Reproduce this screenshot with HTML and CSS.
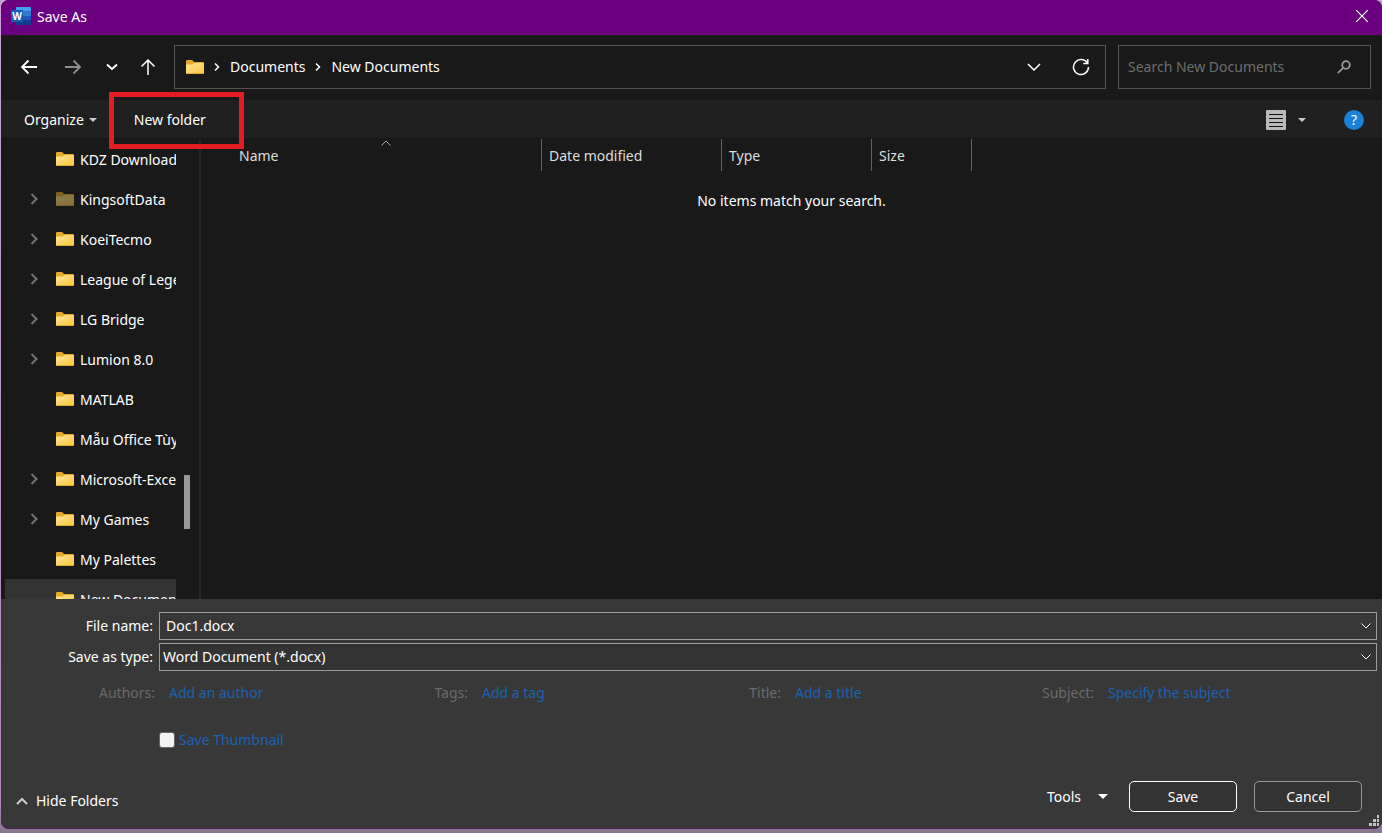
FILE: index.html
```html
<!DOCTYPE html>
<html lang="en">
<head>
    <meta charset="UTF-8">
    <meta name="viewport" content="width=device-width, initial-scale=1.0">
    <title>Save As</title>
    <link rel="stylesheet" href="styles.css">
</head>
<body>
    <!-- shared icons -->
    <svg class="defs" width="0" height="0">
        <defs>
            <linearGradient id="front" x1="0" y1="0" x2="1" y2="1">
                <stop offset="0" stop-color="#ffe394"/>
                <stop offset="1" stop-color="#fbc740"/>
            </linearGradient>
        </defs>
        <symbol id="folder" viewBox="0 0 18 14">
            <path d="M0 1.2Q0 0 1.2 0H5.6Q6.2 0 6.7.5L8 2H16.8Q18 2 18 3.2V7H0Z" fill="#e9a927"/>
            <path d="M0 4.6H6Q6.8 4.6 7.3 4L8.2 3H17Q18 3 18 4V12.8Q18 14 16.8 14H1.2Q0 14 0 12.8Z" fill="url(#front)"/>
            <path d="M0 12.6Q0 14 1.2 14H16.8Q18 14 18 12.6V13H0Z" fill="#e5ab32"/>
        </symbol>
        <symbol id="expand" viewBox="0 0 8 12">
            <path d="M1.5 1 6.5 6 1.5 11" fill="none" stroke="currentColor" stroke-width="2"/>
        </symbol>
        <symbol id="down" viewBox="0 0 12 8">
            <path d="M1.5 1.5 6 6 10.5 1.5" fill="none" stroke="currentColor" stroke-width="1"/>
        </symbol>
    </svg>

    <div class="dialog">
        <header class="titlebar">
            <svg class="word" width="20" height="18" viewBox="0 0 20 18">
                <path d="M5 1Q5 0 6 0H19Q20 0 20 1V4.5H5Z" fill="#41a5ee"/>
                <path d="M5 4.5H20V9H5Z" fill="#2b7cd3"/>
                <path d="M5 9H20V13.5H5Z" fill="#185abd"/>
                <path d="M5 13.5H20V17Q20 18 19 18H6Q5 18 5 17Z" fill="#103f91"/>
                <rect y="3" width="12" height="12" rx="1" fill="#185abd"/>
                <text x="6" y="13" text-anchor="middle">W</text>
            </svg>
            <h1>Save As</h1>
            <button type="button" class="close" aria-label="Close">
                <svg width="12" height="12" viewBox="0 0 12 12"><path d="M0 0 12 12M12 0 0 12" stroke="#fff" stroke-width="1.2"/></svg>
            </button>
        </header>

        <nav class="navbar">
            <button type="button" class="arrow" aria-label="Back">
                <svg width="18" height="16" viewBox="0 0 18 16"><path d="M17 8H2M8.5 1.5 2 8 8.5 14.5"/></svg>
            </button>
            <button type="button" class="arrow forward" aria-label="Forward">
                <svg width="18" height="16" viewBox="0 0 18 16"><path d="M1 8H16M9.5 1.5 16 8 9.5 14.5"/></svg>
            </button>
            <button type="button" class="recent" aria-label="Recent locations">
                <svg width="12" height="8" viewBox="0 0 12 8"><path d="M1 1.5 6 6 11 1.5"/></svg>
            </button>
            <button type="button" class="up" aria-label="Up">
                <svg width="16" height="18" viewBox="0 0 16 18"><path d="M8 17V2M1.5 8.5 8 2 14.5 8.5"/></svg>
            </button>
            <div class="address">
                <svg width="18" height="14"><use href="#folder"/></svg>
                <svg class="sep" width="6" height="8" viewBox="0 0 6 8"><path d="M1 .5 4.5 4 1 7.5"/></svg>
                <a href="#">Documents</a>
                <svg class="sep" width="6" height="8" viewBox="0 0 6 8"><path d="M1 .5 4.5 4 1 7.5"/></svg>
                <a href="#">New Documents</a>
                <button type="button" class="history" aria-label="Previous locations">
                    <svg width="14" height="8" viewBox="0 0 14 8"><path d="M1 1 7 7 13 1"/></svg>
                </button>
                <button type="button" class="refresh" aria-label="Refresh">
                    <svg width="18" height="18" viewBox="0 0 18 18"><path d="M15.6 5.5A7.5 7.5 0 1 0 16.5 9M15.8 1V5.6H11.2"/></svg>
                </button>
            </div>
            <div class="search">
                <input type="text" placeholder="Search New Documents" aria-label="Search New Documents">
                <svg width="14" height="14" viewBox="0 0 14 14"><circle cx="9" cy="5" r="3.8"/><path d="M6.2 7.8.8 13.2"/></svg>
            </div>
        </nav>

        <div class="toolbar">
            <button type="button" class="organize">Organize <span class="caret"></span></button>
            <button type="button" class="new-folder">New folder</button>
            <button type="button" class="view" aria-label="Change view">
                <svg width="20" height="20" viewBox="0 0 20 20">
                    <rect width="20" height="20" rx="1" fill="#b9b9b9"/>
                    <path d="M3 4.5H17M3 8.5H17M3 12.5H17M3 16.5H17" stroke="#111" stroke-width="1"/>
                </svg>
                <span class="caret"></span>
            </button>
            <button type="button" class="help" aria-label="Help">?</button>
        </div>

        <div class="browser">
            <aside class="tree">
                <ul>
                    <li><svg class="folder"><use href="#folder"/></svg><span>KDZ Downloader</span></li>
                    <li class="has-children hidden-folder"><svg class="expand"><use href="#expand"/></svg><svg class="folder"><use href="#folder"/></svg><span>KingsoftData</span></li>
                    <li class="has-children"><svg class="expand"><use href="#expand"/></svg><svg class="folder"><use href="#folder"/></svg><span>KoeiTecmo</span></li>
                    <li class="has-children"><svg class="expand"><use href="#expand"/></svg><svg class="folder"><use href="#folder"/></svg><span>League of Legends</span></li>
                    <li class="has-children"><svg class="expand"><use href="#expand"/></svg><svg class="folder"><use href="#folder"/></svg><span>LG Bridge</span></li>
                    <li class="has-children"><svg class="expand"><use href="#expand"/></svg><svg class="folder"><use href="#folder"/></svg><span>Lumion 8.0</span></li>
                    <li><svg class="folder"><use href="#folder"/></svg><span>MATLAB</span></li>
                    <li><svg class="folder"><use href="#folder"/></svg><span>Mẫu Office Tùy</span></li>
                    <li class="has-children"><svg class="expand"><use href="#expand"/></svg><svg class="folder"><use href="#folder"/></svg><span>Microsoft-Excel</span></li>
                    <li class="has-children"><svg class="expand"><use href="#expand"/></svg><svg class="folder"><use href="#folder"/></svg><span>My Games</span></li>
                    <li><svg class="folder"><use href="#folder"/></svg><span>My Palettes</span></li>
                    <li class="selected"><svg class="folder"><use href="#folder"/></svg><span>New Documents</span></li>
                </ul>
                <div class="thumb"></div>
            </aside>
            <main class="files">
                <table>
                    <thead>
                        <tr>
                            <th class="name">Name
                                <svg class="sort" width="10" height="6" viewBox="0 0 10 6"><path d="M.5 5.5 5 1 9.5 5.5"/></svg>
                            </th>
                            <th class="date">Date modified</th>
                            <th class="type">Type</th>
                            <th class="size">Size</th>
                        </tr>
                    </thead>
                </table>
                <p>No items match your search.</p>
            </main>
        </div>

        <form class="details">
            <div class="fields">
                <label for="filename">File name:</label>
                <div class="field">
                    <input type="text" id="filename" value="Doc1.docx">
                    <svg width="12" height="8"><use href="#down"/></svg>
                </div>
                <label for="filetype">Save as type:</label>
                <div class="field type-field">
                    <select id="filetype">
                        <option>Word Document (*.docx)</option>
                    </select>
                    <svg width="12" height="8"><use href="#down"/></svg>
                </div>
            </div>
            <div class="meta">
                <div><span>Authors:</span><a href="#">Add an author</a></div>
                <div><span>Tags:</span><a href="#">Add a tag</a></div>
                <div><span>Title:</span><a href="#">Add a title</a></div>
                <div><span>Subject:</span><a href="#">Specify the subject</a></div>
            </div>
            <div class="thumbnail">
                <input type="checkbox" id="thumbnail">
                <label for="thumbnail">Save Thumbnail</label>
            </div>
            <div class="actions">
                <button type="button" class="hide">
                    <svg width="12" height="8" viewBox="0 0 12 8"><path d="M1 7 6 2 11 7"/></svg>
                    Hide Folders
                </button>
                <button type="button" class="tools">Tools <span class="caret"></span></button>
                <button type="submit" class="btn primary">Save</button>
                <button type="button" class="btn">Cancel</button>
            </div>
            <svg class="grip" width="10" height="11" viewBox="0 0 10 11">
                <path d="M8 0h2v3h-2zM4 4h3v3h-3zM8 4h2v3h-2zM0 8h3v3h-3zM4 8h3v3h-3zM8 8h2v3h-2z" fill="#c4c4c4"/>
            </svg>
        </form>
    </div>
</body>
</html>
```
FILE: styles.css
```css
* {
    box-sizing: border-box;
}
body {
    margin: 0;
    padding: 0 0 4px 1px;
    height: 100vh;
    font-family: "Noto Sans", "Open Sans", sans-serif;
    font-size: 14px;
    line-height: 22px;
    color: #fff;
    background: linear-gradient(#c9a2d6, #b184c0 97%, #857688);
}
button, input, select {
    font: inherit;
    color: inherit;
    background: none;
    border: 0;
    padding: 0;
    margin: 0;
}
button {
    display: flex;
    align-items: center;
    justify-content: center;
}
a {
    color: inherit;
    text-decoration: none;
}
.defs {
    position: absolute;
}
.dialog {
    display: flex;
    flex-direction: column;
    height: 100%;
    overflow: hidden;
    background: #191919;
    border-bottom: 1px solid #4a1c5c;
    border-radius: 8px;
}
.caret {
    border: 4px solid transparent;
    border-top-color: #ccc;
    border-bottom: 0;
}

/* title bar */
.titlebar {
    display: flex;
    align-items: center;
    flex: none;
    height: 35px;
    padding: 0 14px 3px 10px;
    background: #6a0080;
}
.word text {
    font-size: 10px;
    font-weight: bold;
    fill: #fff;
}
.titlebar h1 {
    margin: 0 auto 0 6px;
    padding-top: 2px;
    font-size: 14px;
    font-weight: normal;
}

/* navigation */
.navbar {
    display: flex;
    flex: none;
    height: 65px;
    padding: 10px 11px 11px 6px;
}
.navbar path, .navbar circle {
    fill: none;
    stroke: currentColor;
    stroke-width: 1.8;
}
.arrow {
    width: 44px;
}
.forward {
    color: #8f8f8f;
}
.recent {
    width: 33px;
}
.up {
    width: 39px;
}
.up path, .address path {
    stroke-width: 1.5;
}
.address {
    display: flex;
    flex: 1;
    align-items: center;
    margin: 0 12px 0 7px;
    padding: 0 15px 0 11px;
    border: 1px solid #535353;
}
.sep {
    margin: 0 10px;
}
.history {
    margin-left: auto;
}
.refresh {
    margin-left: 31px;
}
.search {
    display: flex;
    align-items: center;
    width: 253px;
    padding: 0 19px 0 9px;
    border: 1px solid #535353;
    color: #999;
}
.search input {
    flex: 1;
    min-width: 0;
}
.search input::placeholder {
    color: #6d6d6d;
    opacity: 1;
}

/* toolbar */
.toolbar {
    display: flex;
    align-items: center;
    flex: none;
    height: 39px;
    padding: 1px 18px 0 23px;
    background: #202020;
    border-bottom: 1px solid #151515;
}
.organize {
    gap: 5px;
}
.new-folder {
    position: relative;
    margin: 0 auto 0 37px;
}
/* red highlight round the New folder button */
.new-folder::after {
    content: "";
    position: absolute;
    inset: -17px -38px -18px -25px;
    border: 5px solid #e51c23;
}
.view {
    gap: 12px;
}
.help {
    width: 20px;
    height: 20px;
    margin-left: 38px;
    border-radius: 50%;
    background: #1683d8;
}

/* folder tree and file list */
.browser {
    display: flex;
    flex: 1;
    min-height: 0;
}
.tree {
    display: flex;
    flex: none;
    width: 200px;
    padding: 0 8px 0 4px;
    overflow: hidden;
    border-right: 2px solid #272727;
}
.tree ul {
    width: 171px;
    margin: 0;
    padding: 0;
    list-style: none;
}
.tree li {
    display: flex;
    align-items: center;
    height: 40px;
    padding-left: 51px;
    overflow: hidden;
    white-space: nowrap;
}
.tree .has-children {
    padding-left: 25px;
}
.tree .selected {
    background: #333;
}
.tree span {
    padding-top: 2px;
}
.tree .folder {
    flex: none;
    width: 18px;
    height: 14px;
    margin-right: 6px;
}
.tree .expand {
    flex: none;
    width: 8px;
    height: 12px;
    margin-right: 18px;
    color: #737373;
}
.hidden-folder .folder {
    opacity: 0.5;
}
.thumb {
    width: 6px;
    height: 54px;
    margin: 336px 0 0 8px;
    background: #999;
}
.files {
    flex: 1;
    min-width: 0;
}
.files table {
    margin-left: 30px;
    border-spacing: 0;
    table-layout: fixed;
    width: 741px;
    color: #dedede;
}
.files th {
    height: 32px;
    padding: 2px 7px 0;
    text-align: left;
    font-weight: normal;
    border-right: 1px solid #636363;
}
.files .name {
    position: relative;
    width: 311px;
    padding-left: 8px;
}
.date {
    width: 180px;
}
.type {
    width: 150px;
}
.size {
    width: 100px;
}
.sort {
    position: absolute;
    top: 1px;
    left: calc(50% - 5px);
}
.sort path {
    fill: none;
    stroke: #aaa;
}
.files p {
    margin: 19px 0 0;
    text-align: center;
}

/* file details */
.details {
    position: relative;
    flex: none;
    padding: 13px 0 16px;
    background: #383838;
}
.fields {
    display: grid;
    grid-template-columns: 152px 1fr;
    gap: 3px 6px;
    padding-right: 5px;
    align-items: center;
}
.fields label {
    text-align: right;
}
.field {
    display: flex;
    align-items: center;
    height: 28px;
    padding-right: 4px;
    border: 1px solid #9b9b9b;
    background: #383838;
}
.type-field {
    background: #333;
}
.field input {
    flex: 1;
    padding-left: 6px;
}
.field select {
    flex: 1;
    appearance: none;
    padding-left: 3px;
}
.meta {
    display: grid;
    grid-template-columns: repeat(4, 1fr);
    margin-top: 11px;
    padding: 0 65px 0 64px;
    color: #6b6b6b;
}
.meta div {
    display: grid;
    grid-template-columns: 90px 1fr;
    gap: 14px;
}
.meta span {
    text-align: right;
}
.meta a, .thumbnail {
    color: #1863b4;
}
.thumbnail {
    display: flex;
    align-items: center;
    gap: 4px;
    margin: 25px 0 30px 158px;
}
.thumbnail input {
    appearance: none;
    width: 16px;
    height: 16px;
    border: 1px solid #666;
    border-radius: 3px;
    background: #f3f3f3;
}
.actions {
    display: flex;
    align-items: flex-end;
    padding: 0 20px 0 15px;
}
.hide {
    gap: 8px;
    margin-right: auto;
}
.hide path {
    fill: none;
    stroke: #ccc;
    stroke-width: 2;
}
.tools {
    height: 31px;
    gap: 17px;
    margin-right: 21px;
}
.tools .caret {
    border-width: 5px 5px 0;
    border-top-color: #fff;
}
.btn {
    width: 108px;
    height: 31px;
    border: 1px solid #999;
    border-radius: 5px;
    background: #333;
}
.primary {
    margin-right: 17px;
    border-color: #fff;
}
.grip {
    position: absolute;
    right: 3px;
    bottom: 2px;
}
```
